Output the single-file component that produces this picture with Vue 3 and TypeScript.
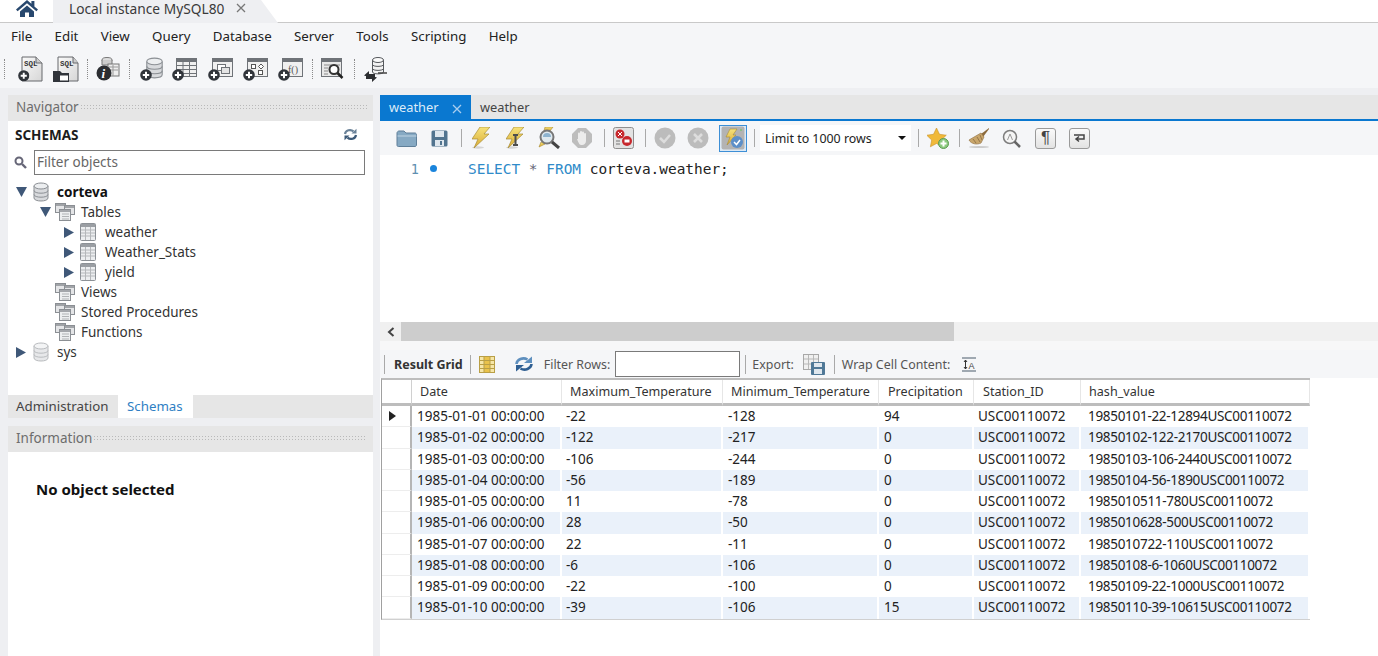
<script setup lang="ts">
const menus = ['File', 'Edit', 'View', 'Query', 'Database', 'Server', 'Tools', 'Scripting', 'Help']

interface Col { name: string; width: number; headPad: number; cellPad: number }
const cols: Col[] = [
  { name: 'Date', width: 150, headPad: 8, cellPad: 5 },
  { name: 'Maximum_Temperature', width: 161, headPad: 8, cellPad: 4 },
  { name: 'Minimum_Temperature', width: 156, headPad: 8, cellPad: 5 },
  { name: 'Precipitation', width: 95, headPad: 9, cellPad: 5 },
  { name: 'Station_ID', width: 107, headPad: 9, cellPad: 4 },
  { name: 'hash_value', width: 229, headPad: 8, cellPad: 7 },
]
const rows: string[][] = [
  ['1985-01-01 00:00:00', '-22', '-128', '94', 'USC00110072', '19850101-22-12894USC00110072'],
  ['1985-01-02 00:00:00', '-122', '-217', '0', 'USC00110072', '19850102-122-2170USC00110072'],
  ['1985-01-03 00:00:00', '-106', '-244', '0', 'USC00110072', '19850103-106-2440USC00110072'],
  ['1985-01-04 00:00:00', '-56', '-189', '0', 'USC00110072', '19850104-56-1890USC00110072'],
  ['1985-01-05 00:00:00', '11', '-78', '0', 'USC00110072', '1985010511-780USC00110072'],
  ['1985-01-06 00:00:00', '28', '-50', '0', 'USC00110072', '1985010628-500USC00110072'],
  ['1985-01-07 00:00:00', '22', '-11', '0', 'USC00110072', '1985010722-110USC00110072'],
  ['1985-01-08 00:00:00', '-6', '-106', '0', 'USC00110072', '19850108-6-1060USC00110072'],
  ['1985-01-09 00:00:00', '-22', '-100', '0', 'USC00110072', '19850109-22-1000USC00110072'],
  ['1985-01-10 00:00:00', '-39', '-106', '15', 'USC00110072', '19850110-39-10615USC00110072'],
]
const gridTemplate = '30px ' + cols.map((c) => c.width + 'px').join(' ')

interface Node { label: string; indent: number; arrow: '' | 'down' | 'right'; icon: 'db' | 'dbl' | 'folder' | 'table'; bold?: boolean }
const tree: Node[] = [
  { label: 'corteva', indent: 8, arrow: 'down', icon: 'db', bold: true },
  { label: 'Tables', indent: 32, arrow: 'down', icon: 'folder' },
  { label: 'weather', indent: 56, arrow: 'right', icon: 'table' },
  { label: 'Weather_Stats', indent: 56, arrow: 'right', icon: 'table' },
  { label: 'yield', indent: 56, arrow: 'right', icon: 'table' },
  { label: 'Views', indent: 32, arrow: '', icon: 'folder' },
  { label: 'Stored Procedures', indent: 32, arrow: '', icon: 'folder' },
  { label: 'Functions', indent: 32, arrow: '', icon: 'folder' },
  { label: 'sys', indent: 8, arrow: 'right', icon: 'dbl' },
]
</script>

<template>
  <div class="app">
    <svg width="0" height="0" class="defs">
      <defs>
        <linearGradient id="boltfill" x1="0" y1="0" x2="0" y2="1">
          <stop offset="0" stop-color="#f6e27a" />
          <stop offset="1" stop-color="#d9ab35" />
        </linearGradient>
        <linearGradient id="docfill" x1="0" y1="0" x2="1" y2="1">
          <stop offset="0" stop-color="#fafafa" />
          <stop offset="1" stop-color="#d6d6d6" />
        </linearGradient>
        <symbol id="plus" viewBox="0 0 12 12">
          <circle cx="6" cy="6" r="5.800" fill="#30343a" />
          <path d="M6 2.800v6.400M2.800 6h6.400" stroke="#fff" stroke-width="2" />
        </symbol>
        <symbol id="bolt" viewBox="0 0 18 22">
          <ellipse cx="6" cy="20.500" rx="6" ry="1.200" fill="#d5d5d5" />
          <path d="M8 0h10l-6 7h5L2 21l4-9H0z" fill="url(#boltfill)" stroke="#a88c36" stroke-width=".7" />
        </symbol>
        <symbol id="folder3" viewBox="0 0 20 18">
          <rect x="0.500" y="0.500" width="10" height="9" fill="#e4e5e7" stroke="#8b8f94" />
          <rect x="9.500" y="2.500" width="10" height="9" fill="#e4e5e7" stroke="#8b8f94" />
          <rect x="4.500" y="6.500" width="11" height="11" fill="#eceef0" stroke="#8b8f94" />
          <path d="M1 2h9M10 4h9M5 8h10" stroke="#8b8f94" stroke-width="1.400" />
          <path d="M7 11h7M7 13.500h7M7 16h7" stroke="#b0b3b6" />
        </symbol>
        <symbol id="tbl" viewBox="0 0 16 18">
          <rect x="0.500" y="0.500" width="15" height="17" rx="1" fill="#eceef0" stroke="#8c9196" />
          <rect x="1" y="1" width="14" height="3" fill="#9a9ea3" />
          <path d="M1 7h14M1 10h14M1 13h14M5.500 4v13M10.500 4v13" stroke="#b4b7ba" />
        </symbol>
        <symbol id="cyl" viewBox="0 0 16 20">
          <path d="M1 4v12c0 4 14 4 14 0V4" fill="#d8dadd" stroke="#8b8f94" />
          <ellipse cx="8" cy="4" rx="7" ry="3" fill="#eceef0" stroke="#8b8f94" />
          <path d="M1 8.500c0 3.600 14 3.600 14 0M1 12.500c0 3.600 14 3.600 14 0" fill="none" stroke="#8b8f94" />
        </symbol>
      </defs>
    </svg>

    <div class="tabstrip">
      <div class="home">
        <svg width="22" height="18" viewBox="0 0 22 18">
          <path d="M11 0 0 9.500l1.600 1.800L11 3.200l9.400 8.100L22 9.500l-3.600-3.100V1h-3v2.800z" fill="#28486e" />
          <path d="M4 11.600 11 5.400l7 6.200V17h-5v-4.500H9V17H4z" fill="#28486e" />
        </svg>
      </div>
      <div class="conn-tab">
        <span>Local instance MySQL80</span>
        <svg class="conn-x" width="10" height="10" viewBox="0 0 10 10"><path d="m1 1 8 8m0-8-8 8" stroke="#777" stroke-width="1.300" /></svg>
      </div>
    </div>

    <div class="menubar">
      <span v-for="m in menus" :key="m" class="menu-item">{{ m }}</span>
    </div>

    <div class="maintools">
      <span class="grip"></span>
      <svg class="ti" width="25" height="26" viewBox="0 0 25 26"><path d="M4 1h14l6 6v18H4z" fill="url(#docfill)" stroke="#66696c" /><path d="M18 1v6h6" fill="#ccc" stroke="#66696c" /><text x="6" y="9.500" class="sqlt">SQL</text><use href="#plus" x="0" y="14" width="11.500" height="11.500" /></svg>
      <svg class="ti i8" width="26" height="26" viewBox="0 0 26 26"><path d="M5 1h15l5 6v18H5z" fill="url(#docfill)" stroke="#66696c" /><path d="M20 1v6h5" fill="#ccc" stroke="#66696c" /><text x="7" y="9.500" class="sqlt">SQL</text><path d="M0 15h7l2 2h7v9H0z" fill="#30343a" /><path d="M7 19.500h8v5H7z" fill="#fff" /></svg>
      <span class="sep s1"></span>
      <svg class="ti" width="24" height="26" viewBox="0 0 24 26"><ellipse cx="11" cy="4" rx="5" ry="2.500" fill="#ddd" stroke="#777" /><path d="M6 4v5h10V4" fill="#ccc" stroke="#777" /><rect x="12" y="8" width="11" height="12" fill="#eee" stroke="#777" /><path d="M13 11h9M13 14h9M17 9v11" stroke="#999" /><circle cx="8" cy="17" r="7.500" fill="#2b2d31" /><text x="5.600" y="22" class="infot">i</text></svg>
      <span class="sep s2"></span>
      <svg class="ti" width="24" height="26" viewBox="0 0 24 26"><use href="#cyl" x="5" y="1" width="19" height="22" /><use href="#plus" x="0" y="13" width="12" height="12" /></svg>
      <svg class="ti i9" width="25" height="26" viewBox="0 0 25 26"><rect x="4.500" y="2.500" width="20" height="18" fill="#f0f0f0" stroke="#6f7378" /><rect x="5" y="3" width="19" height="3" fill="#6f7378" /><path d="M5 9.500h19M5 13.500h19M5 17.500h19M11 6v14M17.500 6v14" stroke="#6f7378" /><use href="#plus" x="0" y="13" width="12" height="12" /></svg>
      <svg class="ti i11" width="25" height="26" viewBox="0 0 25 26"><rect x="4.500" y="2.500" width="20" height="18" fill="#f0f0f0" stroke="#6f7378" /><rect x="5" y="3" width="19" height="3" fill="#6f7378" /><rect x="9.500" y="8.500" width="8" height="6" fill="#fff" stroke="#6f7378" /><rect x="13.500" y="11.500" width="8" height="6" fill="#e4e4e4" stroke="#6f7378" /><use href="#plus" x="0" y="13" width="12" height="12" /></svg>
      <svg class="ti i10" width="25" height="26" viewBox="0 0 25 26"><rect x="4.500" y="2.500" width="20" height="18" fill="#f0f0f0" stroke="#6f7378" /><rect x="5" y="3" width="19" height="3" fill="#6f7378" /><rect x="8.500" y="8.500" width="4" height="4" fill="#fff" stroke="#555" /><path d="m18 8 2.500 2.500L18 13l-2.500-2.500z" fill="#fff" stroke="#555" /><rect x="15.500" y="14.500" width="4" height="4" fill="#fff" stroke="#555" /><use href="#plus" x="0" y="13" width="12" height="12" /></svg>
      <svg class="ti i10" width="25" height="26" viewBox="0 0 25 26"><rect x="4.500" y="2.500" width="20" height="18" fill="#f0f0f0" stroke="#6f7378" /><rect x="5" y="3" width="19" height="3" fill="#6f7378" /><text x="10" y="17" class="ft">f()</text><use href="#plus" x="0" y="13" width="12" height="12" /></svg>
      <span class="sep s3"></span>
      <svg class="ti" width="23" height="26" viewBox="0 0 23 26"><rect x="0.500" y="2.500" width="20" height="18" fill="#e8e8e8" stroke="#6f7378" /><rect x="1" y="3" width="19" height="3" fill="#6f7378" /><path d="M3 9h16M3 12h4M3 15h4M3 18h4" stroke="#8a8a8a" /><circle cx="13" cy="13.500" r="4.500" fill="#fff" stroke="#333" stroke-width="2" /><path d="m16.500 17 5 5" stroke="#222" stroke-width="2.500" /></svg>
      <span class="sep s4"></span>
      <svg class="ti" width="25" height="26" viewBox="0 0 25 26"><path d="M9.500 4v12c0 2.500 11 2.500 11 0V4" fill="#f2f2f2" stroke="#55585c" /><ellipse cx="15" cy="4" rx="5.500" ry="2.500" fill="#fafafa" stroke="#55585c" /><path d="M9.500 8.500c0 2.500 11 2.500 11 0M9.500 12.500c0 2.500 11 2.500 11 0" fill="none" stroke="#55585c" /><path d="M15 17h9" stroke="#444" stroke-width="1.500" /><path d="M1 19.500 6 15v3h6v3H6zM14 21.500 9 26v-3H3v-3h6z" fill="#2c2e31" /></svg>
    </div>

    <div class="workspace">
      <aside class="side">
        <div class="panel-head"><span>Navigator</span><i class="dots"></i></div>
        <div class="nav-body">
          <div class="schemas-head">
            <span class="schemas-title">SCHEMAS</span>
            <svg width="15" height="13" viewBox="0 0 15 13"><path d="M2 6a5 4.500 0 0 1 8.500-2.600" fill="none" stroke="#6a8298" stroke-width="2.200" /><path d="M8.500 5.500h5V.8z" fill="#6a8298" /><path d="M13 7a5 4.500 0 0 1-8.500 2.600" fill="none" stroke="#3d5a78" stroke-width="2.200" /><path d="M6.500 7.500h-5v4.700z" fill="#3d5a78" /></svg>
          </div>
          <div class="filter">
            <svg width="13" height="13" viewBox="0 0 13 13"><circle cx="5" cy="5" r="3.500" fill="none" stroke="#667" stroke-width="2" /><path d="m8 8 4 4" stroke="#667" stroke-width="2.400" /></svg>
            <div class="filter-box">Filter objects</div>
          </div>
          <div class="tree">
            <div v-for="n in tree" :key="n.label" class="node" :style="{ paddingLeft: n.indent + 'px' }">
              <span class="arrow-slot">
                <svg v-if="n.arrow === 'down'" width="11" height="10" viewBox="0 0 11 10"><path d="M0 0h11L5.500 10z" fill="#3f5878" /></svg>
                <svg v-else-if="n.arrow === 'right'" width="10" height="11" viewBox="0 0 10 11"><path d="M0 0v11l10-5.500z" fill="#3f5878" /></svg>
              </span>
              <svg v-if="n.icon === 'db'" class="n-ic db-ic" width="16" height="20" viewBox="0 0 16 20"><use href="#cyl" /></svg>
              <svg v-else-if="n.icon === 'dbl'" class="n-ic db-ic faint" width="16" height="20" viewBox="0 0 16 20"><use href="#cyl" /></svg>
              <svg v-else-if="n.icon === 'folder'" class="n-ic fold-ic" width="20" height="18" viewBox="0 0 20 18"><use href="#folder3" /></svg>
              <svg v-else class="n-ic tbl-ic" width="16" height="18" viewBox="0 0 16 18"><use href="#tbl" /></svg>
              <span class="n-label" :class="{ strong: n.bold }">{{ n.label }}</span>
            </div>
          </div>
        </div>
        <div class="side-tabs">
          <span class="side-tab">Administration</span>
          <span class="side-tab on">Schemas</span>
        </div>
        <div class="panel-head info-head"><span>Information</span><i class="dots"></i></div>
        <div class="info-body">No object selected</div>
      </aside>

      <main class="main">
        <div class="qtabs">
          <div class="qtab active"><span>weather</span><svg class="qx" width="10" height="10" viewBox="0 0 10 10"><path d="m1 1 8 8m0-8-8 8" stroke="#a9cdee" stroke-width="1.300" /></svg></div>
          <div class="qtab">weather</div>
        </div>
        <div class="qtools">
          <svg width="21" height="17" viewBox="0 0 21 17"><path d="M1 3c0-1 1-2 2-2h5l2 2h9c1 0 1.500 1 1.500 2v10c0 1-1 1.500-1.500 1.500H2.500C1.500 16.500 1 16 1 15z" fill="#86a9c3" stroke="#5f7f99" /><path d="M1.500 6h19" stroke="#c0d4e3" /></svg>
          <svg class="g14" width="17" height="17" viewBox="0 0 17 17"><rect x="0.500" y="0.500" width="16" height="16" rx="1.500" fill="#52748f" /><rect x="4" y="1" width="9" height="6" fill="#dfe7ee" /><rect x="4" y="10" width="9" height="6" fill="#dfe7ee" /><rect x="9" y="11" width="2" height="4" fill="#52748f" /></svg>
          <span class="vs v1"></span>
          <svg class="g10" width="18" height="22" viewBox="0 0 18 22"><use href="#bolt" /></svg>
          <svg class="g16" width="18" height="22" viewBox="0 0 18 22"><use href="#bolt" /><path d="M7 8h5M7 18h5M9.500 8v10" stroke="#4d4d4d" stroke-width="2" /></svg>
          <svg class="g14" width="22" height="22" viewBox="0 0 22 22"><path d="M7 0h8l-3 4H6z" fill="url(#boltfill)" stroke="#a88c36" stroke-width=".6" /><path d="M3 15 1 20l6-3z" fill="url(#boltfill)" stroke="#a88c36" stroke-width=".6" /><circle cx="9" cy="10" r="6.500" fill="#dfe9ef" stroke="#777" stroke-width="2" /><path d="M5 10a4 4 0 0 1 8 0z" fill="#8db3cf" /><path d="m14 15 7 6" stroke="#444" stroke-width="3" /></svg>
          <svg class="g11" width="22" height="22" viewBox="0 0 22 22"><path d="M7 1h8l6 6v8l-6 6H7l-6-6V7z" fill="#bdbdbd" /><path d="M7 12V6.500a1 1 0 0 1 2 0V10V5a1 1 0 0 1 2 0v5V5.500a1 1 0 0 1 2 0V10V7a1 1 0 0 1 2 0v7c0 2-1.500 4-4 4s-3-1-5-6z" fill="#ececec" /></svg>
          <span class="vs v2"></span>
          <svg class="g8" width="21" height="22" viewBox="0 0 21 22"><rect x="0.500" y="0.500" width="20" height="21" rx="2" fill="#e2e2e2" stroke="#8f8f8f" /><circle cx="7" cy="7" r="4.500" fill="#c7272c" /><path d="m5 5 4 4m0-4-4 4" stroke="#fff" /><circle cx="14" cy="14" r="5" fill="#c7272c" /><rect x="11.500" y="12.500" width="5" height="3" fill="#fff" /><path d="M3 14h4M3 17h4" stroke="#777" /></svg>
          <span class="vs v2"></span>
          <svg class="g8" width="22" height="22" viewBox="0 0 22 22"><circle cx="11" cy="11" r="10.500" fill="#bcbcbc" /><path d="m6 11 4 4 6-7" fill="none" stroke="#ddd" stroke-width="2.500" /></svg>
          <svg class="g11" width="22" height="22" viewBox="0 0 22 22"><circle cx="11" cy="11" r="10.500" fill="#bcbcbc" /><path d="m7 7 8 8m0-8-8 8" stroke="#ddd" stroke-width="2.500" /></svg>
          <span class="toggle">
            <svg width="24" height="24" viewBox="0 0 24 24"><rect x="0.500" y="0.500" width="23" height="23" rx="2" fill="#b3b3b3" /><path d="M9 3h7l-4 6h3L6 19l3-8H5z" fill="url(#boltfill)" stroke="#a88c36" stroke-width=".6" /><circle cx="16" cy="16" r="6" fill="#5d8fc8" /><path d="m13 16 2.500 2.500L19 14" fill="none" stroke="#fff" stroke-width="1.500" /><circle cx="20" cy="4" r="1" fill="#7ec27a" /></svg>
          </span>
          <span class="vs v3"></span>
          <div class="limit"><span class="limit-txt">Limit to 1000 rows</span><span class="caret"></span></div>
          <span class="vs v4"></span>
          <svg class="g8" width="22" height="21" viewBox="0 0 22 21"><path d="m9.500 0 3 6.300 6.800.9-5 4.800 1.300 6.800-6.100-3.300-6.100 3.300L4.700 12l-5-4.800 6.800-.9z" fill="#f0b93a" stroke="#c7922a" stroke-width=".6" /><circle cx="16.500" cy="15.500" r="5" fill="#8cc97f" stroke="#5b9a50" /><path d="M16.500 12.500v6M13.500 15.500h6" stroke="#fff" stroke-width="2" /></svg>
          <span class="vs v5"></span>
          <svg class="g8" width="22" height="22" viewBox="0 0 22 22"><path d="M21 1 13 7l2 3 6-8z" fill="#8c6b3d" /><path d="M13 6 1 13c2 4 8 5 12 3l3-6z" fill="#c9a66b" stroke="#96774a" stroke-width=".7" /><path d="M5 12l3 4M9 10l3 5M12 8l2 5" stroke="#96774a" /><ellipse cx="11" cy="20" rx="10" ry="1" fill="#ccc" /></svg>
          <svg class="g12" width="19" height="19" viewBox="0 0 19 19"><circle cx="8" cy="8" r="6.500" fill="#f5f5f5" stroke="#7d7d7d" stroke-width="1.500" /><path d="m5.500 11 2.500-6 2.500 6" fill="none" stroke="#999" /><path d="m12.500 12.500 5.500 5.500" stroke="#666" stroke-width="2.500" /></svg>
          <span class="kbd k14">¶</span>
          <span class="kbd k13"><svg width="12" height="10" viewBox="0 0 12 10"><path d="M0 2h10v4H3M5 3.500 2 6l3 2.500" fill="none" stroke="#444" stroke-width="1.500" /></svg></span>
        </div>

        <div class="editor">
          <div class="code-line">
            <span class="ln">1</span>
            <span class="dot"></span>
            <code><span class="kw">SELECT</span> <span class="kw2">*</span> <span class="kw">FROM</span> corteva.weather;</code>
          </div>
        </div>

        <div class="hscroll">
          <span class="left-btn"><svg width="8" height="10" viewBox="0 0 8 10"><path d="M6.500 1 2 5l4.500 4" fill="none" stroke="#444" stroke-width="2" /></svg></span>
          <span class="thumb"></span>
        </div>

        <div class="rtools">
          <span class="rs rs0"></span>
          <b class="rg">Result Grid</b>
          <span class="rs rs1"></span>
          <svg class="r8" width="16" height="17" viewBox="0 0 16 17"><rect x="0.500" y="0.500" width="15" height="16" fill="#f6e6a8" stroke="#b99f46" /><rect x="5" y="1" width="6" height="15" fill="#e9c24b" /><path d="M1 4.500h14M1 8.500h14M1 12.500h14M5 1v15M11 1v15" stroke="#b99f46" /></svg>
          <svg class="r19" width="20" height="16" viewBox="0 0 20 16"><path d="M2.500 8a7 6 0 0 1 11-4.500" fill="none" stroke="#5e8fbe" stroke-width="2.600" /><path d="M10 7h8V.5z" fill="#5e8fbe" /><path d="M17.500 8a7 6 0 0 1-11 4.500" fill="none" stroke="#2f5f92" stroke-width="2.600" /><path d="M10 9H2v6.500z" fill="#2f5f92" /></svg>
          <span class="lbl l10">Filter Rows:</span>
          <span class="r-input"></span>
          <span class="rs rs5"></span>
          <span class="lbl l6">Export:</span>
          <svg class="r9" width="22" height="21" viewBox="0 0 22 21"><rect x="0.500" y="0.500" width="15" height="15" fill="#f0f0f0" stroke="#a8a8a8" /><path d="M1 5h14M1 10h14M5.500 1v14M10.500 1v14" stroke="#b8b8b8" /><rect x="8" y="8" width="14" height="13" rx="1" fill="#4f7897" /><rect x="11" y="9" width="8" height="4" fill="#dfe7ee" /><rect x="11" y="15" width="8" height="5" fill="#dfe7ee" /></svg>
          <span class="rs rs9"></span>
          <span class="lbl l7">Wrap Cell Content:</span>
          <svg class="r12" width="14" height="15" viewBox="0 0 14 15"><path d="M0 1h14M0 14h14" stroke="#4a5a6a" stroke-width="1.200" /><path d="M3.500 3v9M2 5l1.500-2L5 5M2 10l1.500 2L5 10" fill="none" stroke="#333" /><text x="6.500" y="11.500" class="wrapt">A</text></svg>
        </div>

        <div class="grid" :style="{ gridTemplateColumns: gridTemplate }">
          <div class="hcell corner"></div>
          <div v-for="c in cols" :key="c.name" class="hcell" :style="{ paddingLeft: c.headPad + 'px' }">{{ c.name }}</div>
          <template v-for="(r, i) in rows" :key="i">
            <div class="rowhead">
              <svg v-if="i === 0" width="7" height="10" viewBox="0 0 7 10"><path d="M0 0v10l7-5z" fill="#222" /></svg>
            </div>
            <div
              v-for="(v, j) in r"
              :key="j"
              class="cell"
              :class="{ alt: i % 2 === 1, hash: j === 5 }"
              :style="{ paddingLeft: cols[j].cellPad + 'px' }"
            >{{ v }}</div>
          </template>
        </div>
      </main>
    </div>
  </div>
</template>

<style>
html, body { margin: 0; padding: 0; background: #fff; overflow: hidden; }
</style>

<style scoped>
.app {
  width: 1378px;
  height: 656px;
  overflow: hidden;
  font-family: "Noto Sans", "Open Sans", sans-serif;
  font-size: 13.5px;
  color: #222;
  background: #eeeff2;
  display: flex;
  flex-direction: column;
}
.defs { position: absolute; }
.tabstrip {
  height: 22px;
  display: flex;
  background: #fff;
  border-bottom: 1px solid #c9c9c9;
  flex: none;
}
.home {
  width: 53px;
  box-sizing: border-box;
  padding-left: 16px;
  overflow: hidden;
  height: 23px;
  border-bottom: 1px solid #c9c9c9;
}
.conn-tab {
  width: 225px;
  height: 23px;
  box-sizing: border-box;
  background: #eeeff2;
  clip-path: polygon(0 0, 208px 0, 225px 23px, 0 23px);
  padding: 0 0 7px 16px;
  display: flex;
  align-items: center;
  font-size: 13.75px;
  color: #3a3a3a;
}
.conn-x { margin-left: 12px; }
.menubar {
  height: 30px;
  box-sizing: border-box;
  display: flex;
  align-items: center;
  background: #f5f6f8;
  padding: 0 0 4px 11px;
  font-size: 13.3px;
  gap: 22.3px;
  color: #222;
  flex: none;
}
.maintools {
  height: 35px;
  box-sizing: border-box;
  padding: 0 0 3px 4px;
  background: #f5f6f8;
  display: flex;
  align-items: center;
  flex: none;
}
.grip { width: 1px; height: 20px; border-left: 1px dotted #8a8a8a; margin-right: 8px; flex: none; box-sizing: border-box; }
.ti { margin-left: 5px; flex: none; }
.i8 { margin-left: 10px; }
.i9 { margin-left: 8px; }
.i10 { margin-left: 10px; }
.i11 { margin-left: 11px; }
.sqlt { font: bold 7.500px "Liberation Mono", monospace; fill: #333; }
.infot { font: bold italic 13px "Liberation Serif", serif; fill: #fff; }
.ft { font: 10px "Liberation Serif", serif; fill: #555; }
.wrapt { font: 9px "Liberation Sans", sans-serif; fill: #444; }
.sep { width: 1px; height: 20px; border-left: 1px dotted #8a8a8a; flex: none; box-sizing: border-box; }
.s1 { margin-left: 8px; margin-right: 3px; }
.s2 { margin-left: 9px; margin-right: 5px; }
.s3 { margin-left: 9px; margin-right: 3px; }
.s4 { margin-left: 10px; margin-right: 3px; }

.workspace {
  flex: 1;
  display: flex;
  min-height: 0;
  padding-top: 7px;
  padding-left: 8px;
}
.side {
  width: 365px;
  display: flex;
  flex-direction: column;
  flex: none;
}
.panel-head {
  height: 26px;
  box-sizing: border-box;
  padding: 0 6px 2px 8px;
  background: #e6e6e6;
  display: flex;
  align-items: center;
  color: #6d6d6d;
  font-size: 13.5px;
  flex: none;
}
.dots {
  flex: 1;
  height: 7px;
  margin-left: 1px;
  background-image: radial-gradient(#b9b9b9 0.7px, transparent 0.8px);
  background-size: 3px 3px;
}
.nav-body { background: #fff; height: 274px; flex: none; }
.schemas-head {
  height: 27px;
  display: flex;
  align-items: center;
  justify-content: space-between;
  padding: 0 15px 0 7px;
}
.schemas-title { font-weight: 700; font-size: 13.5px; color: #1c1c1c; }
.filter {
  display: flex;
  align-items: center;
  height: 25px;
  margin-top: 2px;
  padding-left: 6px;
}
.filter-box {
  margin-left: 7px;
  width: 331px;
  height: 25px;
  box-sizing: border-box;
  border: 1px solid #7a7a7a;
  padding-left: 2px;
  line-height: 22px;
  color: #666;
  font-size: 13.5px;
}
.tree { margin-top: 7px; }
.node { height: 20px; display: flex; align-items: center; }
.arrow-slot { width: 11px; height: 20px; display: flex; align-items: center; flex: none; }
.n-ic { flex: none; }
.db-ic { margin: 0 0 0 6px; }
.faint { opacity: 0.6; }
.fold-ic { margin-left: 4px; margin-right: 6px; }
.tbl-ic { margin-left: 5px; margin-right: 9px; }
.n-label { color: #333; line-height: 20px; }
.db-ic + .n-label { margin-left: 8px; }
.strong { font-weight: 700; color: #111; }

.side-tabs {
  height: 23px;
  display: flex;
  background: #e6e6e6;
  flex: none;
}
.side-tab { width: 110px; box-sizing: border-box; padding: 0 0 0 8px; line-height: 22px; color: #444; font-size: 13.3px; }
.side-tab.on { background: #fff; color: #2f7fc4; width: 75px; padding: 0 0 0 9px; }
.info-head { margin-top: 8px; }
.info-body {
  flex: 1;
  background: #fff;
  padding: 27px 0 0 28px;
  font-weight: 700;
  font-size: 15px;
  color: #111;
  line-height: 20px;
}

.main {
  flex: 1;
  min-width: 0;
  margin-left: 7px;
  display: flex;
  flex-direction: column;
  background: #fff;
}
.qtabs {
  height: 26px;
  background: #e6e6e6;
  border-bottom: 2px solid #0a78d0;
  box-sizing: border-box;
  display: flex;
  flex: none;
}
.qtab { width: 91px; padding-left: 9px; line-height: 24px; box-sizing: border-box; color: #444; font-size: 12.8px; }
.qtab.active {
  background: #0a78d0;
  color: #dcebf8;
  display: flex;
  justify-content: space-between;
  align-items: center;
  padding-right: 9px;
}
.qx { margin-top: 3px; }
.qtools {
  height: 34px;
  background: #f5f6f8;
  display: flex;
  align-items: center;
  padding-left: 16px;
  flex: none;
}
.qtools > svg { flex: none; }
.g8 { margin-left: 8px; }
.g10 { margin-left: 10px; }
.g11 { margin-left: 11px; }
.g12 { margin-left: 12px; }
.g14 { margin-left: 14px; }
.g16 { margin-left: 16px; }
.vs { width: 1px; height: 18px; background: #a9a9a9; flex: none; }
.v1 { margin-left: 13px; }
.v2 { margin-left: 11px; }
.v3 { margin-left: 7px; }
.v4 { margin-left: 7px; }
.v5 { margin-left: 10px; }
.toggle {
  margin-left: 10px;
  width: 28px;
  height: 27px;
  box-sizing: border-box;
  border: 1px solid #3d8fd6;
  background: #dce9f5;
  display: flex;
  align-items: center;
  justify-content: center;
  flex: none;
}
.limit {
  margin-left: 5px;
  width: 151px;
  height: 26px;
  background: #fff;
  display: flex;
  align-items: center;
  justify-content: space-between;
  padding: 0 4px 0 5px;
  box-sizing: border-box;
  flex: none;
}
.limit-txt { color: #222; font-size: 12.4px; }
.caret { width: 0; height: 0; border: 4px solid transparent; border-top: 4px solid #111; border-bottom: 0; margin-right: 1px; }
.kbd {
  box-sizing: border-box;
  height: 21px;
  border: 1px solid #9a9a9a;
  border-radius: 3px;
  background: linear-gradient(#fafafa, #e3e3e3);
  display: flex;
  align-items: center;
  justify-content: center;
  flex: none;
  color: #444;
}
.k14 { margin-left: 14px; width: 21px; font-size: 17px; font-family: "Liberation Sans", sans-serif; }
.k13 { margin-left: 13px; width: 21px; }

.editor { height: 167px; background: #fff; flex: none; }
.code-line { display: flex; align-items: center; height: 27px; }
.ln { width: 39px; text-align: right; color: #5f8fb0; font: 13.5px "DejaVu Sans Mono", monospace; }
.dot { width: 7px; height: 7px; border-radius: 50%; background: #1a84dc; margin-left: 11px; flex: none; }
.code-line code { margin-left: 31px; font: 14.45px "DejaVu Sans Mono", monospace; color: #222; white-space: pre; }
.kw { color: #2f8bc9; }
.kw2 { color: #667; }
.hscroll { height: 19px; background: #f0f0f0; display: flex; flex: none; }
.left-btn { width: 21px; display: flex; align-items: center; justify-content: center; background: #f0f0f0; }
.thumb { width: 553px; background: #cdcdcd; }
.rtools {
  height: 37px;
  box-sizing: border-box;
  border-top: 9px solid #f7f7f8;
  background: #f5f6f8;
  display: flex;
  align-items: center;
  flex: none;
  font-size: 12.4px;
}
.rs { width: 1px; height: 19px; background: #a9a9a9; flex: none; }
.rs0 { margin-left: 4px; }
.rg { margin-left: 9px; font-size: 12.5px; color: #333; }
.rs1 { margin-left: 7px; }
.r8 { margin-left: 8px; flex: none; }
.r9 { margin-left: 9px; flex: none; }
.r12 { margin-left: 12px; flex: none; }
.r19 { margin-left: 19px; flex: none; }
.lbl { color: #555; white-space: nowrap; }
.l10 { margin-left: 10px; }
.l6 { margin-left: 6px; }
.l7 { margin-left: 7px; }
.r-input { margin-left: 5px; width: 125px; height: 26px; box-sizing: border-box; border: 1px solid #7a7a7a; background: #fff; flex: none; }
.rs5 { margin-left: 5px; }
.rs9 { margin-left: 9px; }

.grid {
  display: grid;
  grid-auto-rows: 21.25px;
  grid-template-rows: 26px;
  width: max-content;
  margin-left: 1px;
  background: #fff;
  font-size: 13.5px;
  border-left: 1px solid #a0a0a0;
  border-bottom: 1px solid #d0d0d0;
  border-top: 2px solid #bdbdbd;
}
.hcell {
  box-sizing: border-box;
  border-bottom: 3px solid #bdbdbd;
  border-right: 1px solid #e6e6e6;
  line-height: 23px;
  color: #333;
  font-size: 12.6px;
  white-space: nowrap;
  overflow: hidden;
}
.corner { border-right: 1px solid #d0d0d0; padding: 0; }
.rowhead {
  border-right: 2px solid #b5b5b5;
  border-bottom: 1px solid #ededed;
  display: flex;
  align-items: center;
  padding-left: 7px;
  box-sizing: border-box;
}
.cell {
  box-sizing: border-box;
  line-height: 20px;
  color: #222;
  white-space: nowrap;
  border-right: 2px solid #fff;
  overflow: hidden;
}
.cell.alt { background: #eaf1fa; }
.cell.hash { letter-spacing: -0.3px; }
</style>
